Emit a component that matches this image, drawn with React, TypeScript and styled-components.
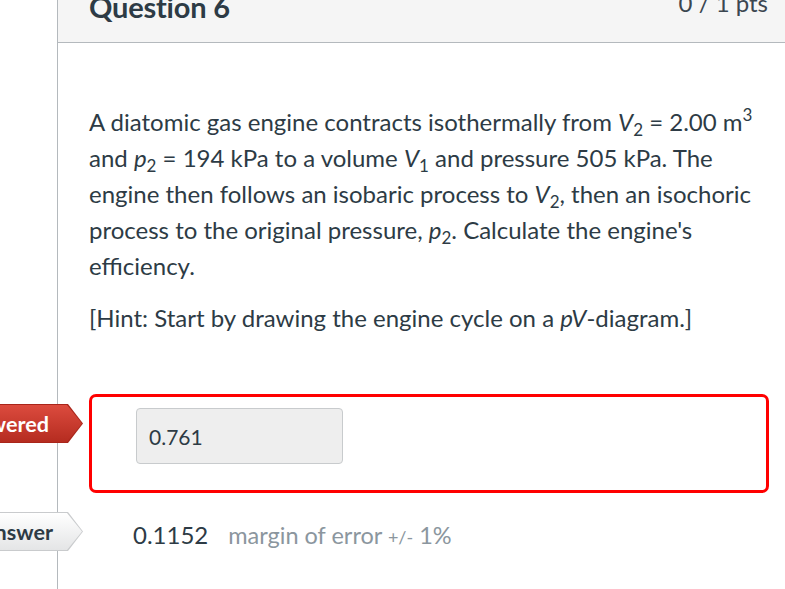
import styled, { createGlobalStyle } from 'styled-components';

const GlobalStyle = createGlobalStyle`
	html, body {
		margin: 0;
		padding: 0;
		background: #fff;
		overflow: hidden;
	}
	body {
		font-family: Lato, 'Open Sans', sans-serif;
		color: #2d3b45;
	}
`;

function App() {
	return (
		<Page>
			<GlobalStyle />
			<QuestionCard>
				<Header>
					<Title>Question 6</Title>
					<Points>0 / 1 pts</Points>
				</Header>
				<Body>
					<QuestionText>
						<p>
							A diatomic gas engine contracts isothermally from <Var>V</Var>
							<sub>2</sub> = 2.00 m<sup>3</sup> and <Var>p</Var>
							<sub>2</sub> = 194 kPa to a volume <Var>V</Var>
							<sub>1</sub> and pressure 505 kPa. The engine then follows an
							isobaric process to <Var>V</Var>
							<sub>2</sub>, then an isochoric process to the original
							pressure, <Var>p</Var>
							<sub>2</sub>. Calculate the engine's efficiency.
						</p>
						<p>
							[Hint: Start by drawing the engine cycle on a <Var>pV</Var>
							-diagram.]
						</p>
					</QuestionText>
					<Answers>
						<AnswerRow $selected>
							<Tag $tone="wrong">You Answered</Tag>
							<AnswerInput>0.761</AnswerInput>
						</AnswerRow>
						<AnswerRow>
							<Tag $tone="correct">Correct Answer</Tag>
							<CorrectValue>0.1152</CorrectValue>
							<Margin>
								margin of error <small>+/-</small> 1%
							</Margin>
						</AnswerRow>
					</Answers>
				</Body>
			</QuestionCard>
		</Page>
	);
}

const Page = styled.div`
	width: 785px;
	height: 589px;
	overflow: hidden;
`;

const QuestionCard = styled.div`
	margin-left: 57px;
	margin-top: -20px;
	height: 620px;
	border-left: 1px solid #b4b9bd;
`;

const Header = styled.div`
	height: 63px;
	box-sizing: border-box;
	background: #f5f5f5;
	border-bottom: 1px solid #b4b9bd;
	padding: 0 17px 0 31px;
	display: flex;
	justify-content: space-between;
	align-items: flex-start;
`;

const Title = styled.div`
	font-size: 29px;
	font-weight: 700;
	line-height: 54px;
	letter-spacing: -0.2px;
`;

const Points = styled.div`
	font-size: 24px;
	line-height: 45px;
	color: #3b4650;
`;

const Body = styled.div`
	padding: 61px 17px 0 31px;
`;

const QuestionText = styled.div`
	font-size: 24px;
	line-height: 36px;

	p {
		margin: 0 0 16px;
	}

	sub,
	sup {
		font-size: 17px;
		line-height: 0;
	}
	sub {
		vertical-align: -5px;
	}
	sup {
		vertical-align: 10px;
	}
`;

const Var = styled.i`
	font-style: italic;
`;

const Answers = styled.div`
	margin-top: 58px;
	display: flex;
	flex-direction: column;
	gap: 19px;
`;

const AnswerRow = styled.div<{ $selected?: boolean }>`
	position: relative;
	display: flex;
	align-items: baseline;
	box-sizing: border-box;
	width: 680px;
	line-height: ${(p) => (p.$selected ? 'normal' : '39px')};
	padding: ${(p) => (p.$selected ? '11px 44px 26px' : '0 44px')};
	border: 3px solid ${(p) => (p.$selected ? '#f00' : 'transparent')};
	border-radius: 7px;
`;

const Tag = styled.div<{ $tone: 'wrong' | 'correct' }>`
	position: absolute;
	right: calc(100% + 9px);
	top: ${(p) => (p.$tone === 'wrong' ? '7px' : '-3px')};
	height: 39px;
	padding: 0 ${(p) => (p.$tone === 'wrong' ? '34px' : '30px')} 0 14px;
	display: flex;
	align-items: center;
	white-space: nowrap;
	font-size: 21.6px;
	line-height: normal;
	font-weight: 700;
	color: ${(p) => (p.$tone === 'wrong' ? '#fff' : '#2d3b45')};
	z-index: 0;

	&::before,
	&::after {
		content: '';
		position: absolute;
		clip-path: polygon(0 0, calc(100% - 15px) 0, 100% 50%, calc(100% - 15px) 100%, 0 100%);
		z-index: -1;
	}
	&::before {
		inset: 0;
		background: ${(p) => (p.$tone === 'wrong' ? '#a9251a' : '#c9cbcd')};
	}
	&::after {
		inset: 1px 1px 1px 0;
		background: ${(p) =>
			p.$tone === 'wrong'
				? 'linear-gradient(#dc4b3e, #b52c20)'
				: 'linear-gradient(#ffffff, #e4e5e6)'};
	}
`;

const AnswerInput = styled.div`
	width: 207px;
	height: 56px;
	box-sizing: border-box;
	padding: 0 12px;
	display: flex;
	align-items: center;
	background: #eeeeee;
	border: 1px solid #c8cbcd;
	border-radius: 4px;
	font-size: 21px;
	color: #2d3b45;
`;

const CorrectValue = styled.span`
	font-size: 24px;
	margin-left: -3px;
	color: #2d3b45;
`;

const Margin = styled.span`
	margin-left: 20px;
	font-size: 23.5px;
	color: #8b969e;

	small {
		font-size: 18px;
	}
`;

export default App;
